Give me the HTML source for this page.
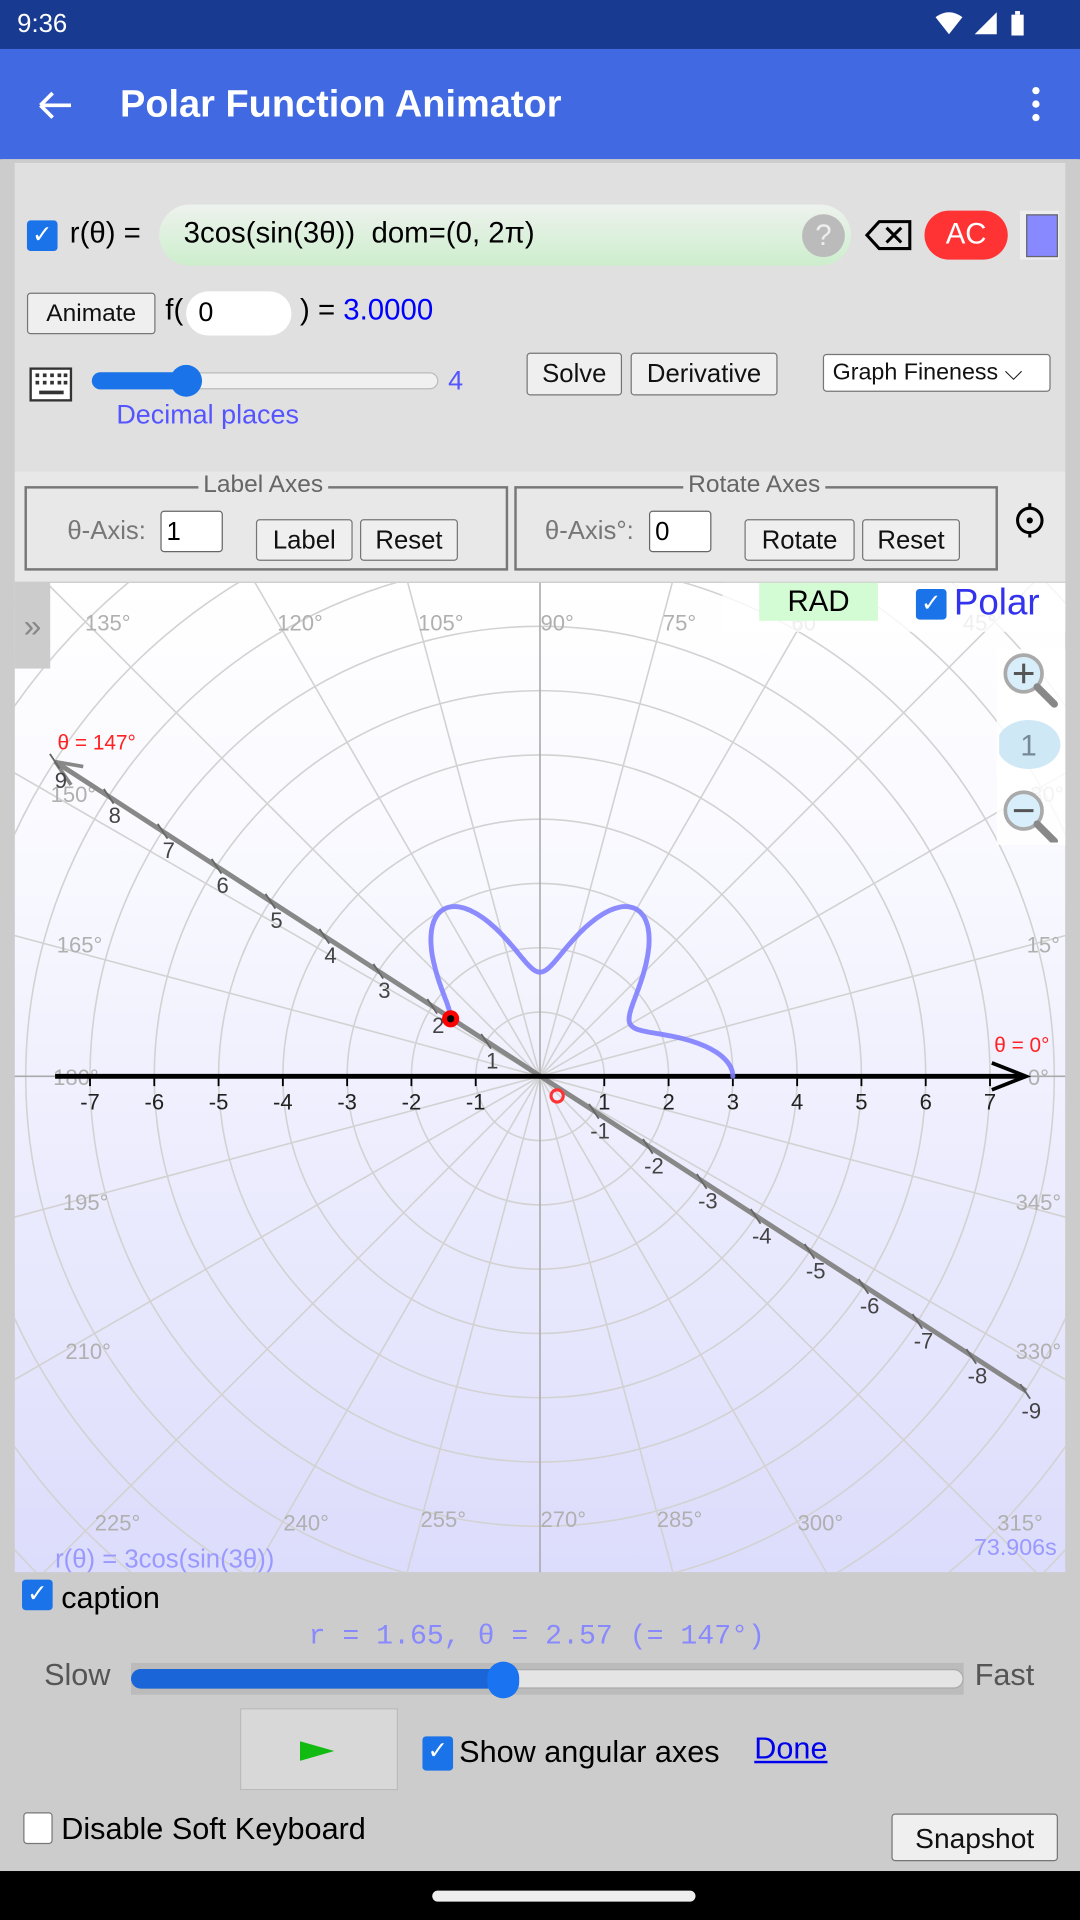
<!DOCTYPE html>
<html><head><meta charset="utf-8"><style>
html,body{margin:0;padding:0;width:1080px;height:1920px;overflow:hidden;background:#000;font-family:"Liberation Sans","DejaVu Sans",sans-serif}
#w{position:absolute;left:0;top:0;width:882px;height:1568px;transform:scale(1.22449);transform-origin:0 0;background:#ccc;overflow:hidden}
.a{position:absolute}
.btn{position:absolute;background:#efefef;border:1.5px solid #767676;border-radius:3px;font-size:20px;color:#111;text-align:center;box-sizing:border-box}
.cb{position:absolute;width:25px;height:25px;background:#1a73e8;border-radius:3px;color:#fff;font-size:20px;line-height:25px;text-align:center;font-weight:bold}
.t{position:absolute;white-space:nowrap}
</style></head><body><div id="w">
<div class="a" style="left:0;top:0;width:882px;height:40px;background:#183a91"></div>
<div class="t" style="left:14px;top:8px;color:#fff;font-size:21px">9:36</div>
<svg class="a" style="left:760px;top:8px" width="82" height="22"><path d="M4 6 Q15 -2 26 6 L15 20Z" fill="#fff"/><path d="M36 20 L54 2 L54 20Z" fill="#fff"/><rect x="66" y="4" width="10" height="17" fill="#fff"/><rect x="69" y="1" width="4" height="3" fill="#fff"/></svg>
<div class="a" style="left:0;top:40px;width:882px;height:90px;background:#4169e1"></div>
<svg class="a" style="left:30px;top:72px" width="32" height="28"><path d="M3 14H28M3 14L13 4M3 14L13 24" stroke="#fff" stroke-width="3" fill="none"/></svg>
<div class="t" style="left:98px;top:67px;color:#fff;font-size:31px;font-weight:bold">Polar Function Animator</div>
<svg class="a" style="left:838px;top:70px" width="16" height="30"><circle cx="8" cy="4" r="3" fill="#fff"/><circle cx="8" cy="15" r="3" fill="#fff"/><circle cx="8" cy="26" r="3" fill="#fff"/></svg>
<div class="a" style="left:2px;top:130px;width:878px;height:1398px;background:#ccc"></div>
<div class="a" style="left:12px;top:133px;width:858px;height:252px;background:#e0e0e0"></div>
<div class="cb" style="left:22px;top:180px">✓</div>
<div class="t" style="left:57px;top:177px;font-size:24px">r(θ) =</div>
<div class="a" style="left:130px;top:167px;width:565px;height:50px;border-radius:25px;background:linear-gradient(#eef2ee,#cdeecd)"></div>
<div class="t" style="left:150px;top:177px;font-size:24px">3cos(sin(3θ))&nbsp; dom=(0, 2π)</div>
<div class="a" style="left:655px;top:175px;width:35px;height:35px;border-radius:50%;background:#bbb;color:#eee;font-size:24px;text-align:center;line-height:35px">?</div>
<svg class="a" style="left:706px;top:178px" width="40" height="28"><path d="M12 3H37V25H12L2 14Z" fill="none" stroke="#000" stroke-width="2.5"/><path d="M18 8L30 20M30 8L18 20" stroke="#000" stroke-width="2.5"/></svg>
<div class="a" style="left:755px;top:172px;width:68px;height:40px;border-radius:20px;background:#f33;color:#fff;font-size:24px;text-align:center;line-height:40px">AC</div>
<div class="a" style="left:833px;top:172px;width:32px;height:40px;background:#eee"></div>
<div class="a" style="left:838px;top:175px;width:24px;height:33px;background:#8888ff;border:1px solid #666"></div>
<div class="btn" style="left:22px;top:239px;width:105px;height:34px;line-height:33px">Animate</div>
<div class="t" style="left:135px;top:240px;font-size:24px">f(</div>
<div class="a" style="left:152px;top:238px;width:86px;height:36px;border-radius:18px;background:#fff"></div>
<div class="t" style="left:162px;top:242px;font-size:22px">0</div>
<div class="t" style="left:245px;top:240px;font-size:24px">) = <span style="color:#00f">3.0000</span></div>
<svg class="a" style="left:24px;top:300px" width="35" height="28"><rect x="1" y="1" width="33" height="26" fill="#fff" stroke="#333" stroke-width="2"/><g fill="#333"><rect x="5" y="5" width="3" height="3"/><rect x="11" y="5" width="3" height="3"/><rect x="17" y="5" width="3" height="3"/><rect x="23" y="5" width="3" height="3"/><rect x="28" y="5" width="3" height="3"/><rect x="5" y="11" width="3" height="3"/><rect x="11" y="11" width="3" height="3"/><rect x="17" y="11" width="3" height="3"/><rect x="23" y="11" width="3" height="3"/><rect x="28" y="11" width="3" height="3"/><rect x="8" y="19" width="20" height="3"/></g></svg>
<div class="a" style="left:75px;top:304px;width:283px;height:14px;border-radius:7px;background:#f0f0f0;border:1px solid #bbb;box-sizing:border-box"></div>
<div class="a" style="left:75px;top:304px;width:80px;height:14px;border-radius:7px;background:#1a73e8"></div>
<div class="a" style="left:139px;top:298px;width:26px;height:26px;border-radius:50%;background:#1a73e8"></div>
<div class="t" style="left:366px;top:298px;font-size:22px;color:#5555ff">4</div>
<div class="t" style="left:95px;top:326px;font-size:22px;color:#5555ff">Decimal places</div>
<div class="btn" style="left:430px;top:288px;width:78px;height:35px;line-height:33px;font-size:21px">Solve</div>
<div class="btn" style="left:515px;top:288px;width:120px;height:35px;line-height:33px;font-size:21px">Derivative</div>
<div class="btn" style="left:672px;top:289px;width:186px;height:31px;line-height:29px;background:#fff;text-align:left;padding-left:7px;font-size:19px">Graph Fineness ⌵</div>
<div class="a" style="left:12px;top:385px;width:858px;height:90px;background:#e8e8e8"></div>
<div class="a" style="left:20px;top:397px;width:395px;height:69px;border:2px solid #777;box-sizing:border-box"></div>
<div class="t" style="left:162px;top:385px;font-size:20px;color:#666;background:#e8e8e8;padding:0 4px">Label Axes</div>
<div class="t" style="left:55px;top:422px;font-size:21px;color:#777">θ-Axis:</div>
<div class="a" style="left:131px;top:417px;width:51px;height:34px;background:#fff;border:1.5px solid #666;border-radius:3px;box-sizing:border-box;font-size:21px;padding:5px 4px">1</div>
<div class="btn" style="left:209px;top:424px;width:79px;height:34px;line-height:33px;font-size:21px">Label</div>
<div class="btn" style="left:294px;top:424px;width:80px;height:34px;line-height:33px;font-size:21px">Reset</div>
<div class="a" style="left:420px;top:397px;width:395px;height:69px;border:2px solid #777;box-sizing:border-box"></div>
<div class="t" style="left:558px;top:385px;font-size:20px;color:#666;background:#e8e8e8;padding:0 4px">Rotate Axes</div>
<div class="t" style="left:445px;top:422px;font-size:21px;color:#777">θ-Axis°:</div>
<div class="a" style="left:530px;top:417px;width:51px;height:34px;background:#fff;border:1.5px solid #666;border-radius:3px;box-sizing:border-box;font-size:21px;padding:5px 4px">0</div>
<div class="btn" style="left:608px;top:424px;width:90px;height:34px;line-height:33px;font-size:21px">Rotate</div>
<div class="btn" style="left:704px;top:424px;width:80px;height:34px;line-height:33px;font-size:21px">Reset</div>
<svg class="a" style="left:826px;top:408px" width="30" height="34"><circle cx="15" cy="17" r="10" fill="none" stroke="#000" stroke-width="2.5"/><circle cx="15" cy="17" r="2.5"/><path d="M15 3V7M15 27V31" stroke="#000" stroke-width="2.5"/></svg>
<svg class="a" id="g" style="left:12px;top:476px" width="858" height="808" viewBox="12 476 858 808"></svg>
<div class="a" style="left:12px;top:476px;width:29px;height:70px;background:#ccc;color:#888;font-size:26px;text-align:center;line-height:70px">»</div>
<div class="a" style="left:590px;top:476px;width:280px;height:40px;background:rgba(255,255,255,.8)"></div>
<div class="a" style="left:620px;top:476px;width:97px;height:31px;background:#d4fcd4;font-size:24px;text-align:center;line-height:31px">RAD</div>
<div class="cb" style="left:748px;top:481px;width:25px">✓</div>
<div class="t" style="left:779px;top:476px;font-size:30px;color:#3333ee">Polar</div>
<div class="a" style="left:814px;top:530px;width:56px;height:160px;background:rgba(255,255,255,.85)"></div>
<svg class="a" style="left:816px;top:532px" width="52" height="156"><g><circle cx="20" cy="18" r="15" fill="#d8eefa" stroke="#aaa" stroke-width="3"/><path d="M31 29L45 43" stroke="#888" stroke-width="6" stroke-linecap="round"/><path d="M12 18H28M20 10V26" stroke="#555" stroke-width="2.5"/></g><ellipse cx="24" cy="76" rx="26" ry="20" fill="#cfe8f5"/><text x="24" y="85" font-size="24" fill="#789" text-anchor="middle" font-family="Liberation Sans">1</text><g transform="translate(0,112)"><circle cx="20" cy="18" r="15" fill="#d8eefa" stroke="#aaa" stroke-width="3"/><path d="M31 29L45 43" stroke="#888" stroke-width="6" stroke-linecap="round"/><path d="M12 18H28" stroke="#555" stroke-width="2.5"/></g></svg>
<div class="cb" style="left:18px;top:1290px">✓</div>
<div class="t" style="left:50px;top:1291px;font-size:25px">caption</div>
<div class="t" style="left:252px;top:1323px;font-size:23px;color:#8888ff;font-family:'Liberation Mono',monospace">r = 1.65, θ = 2.57 (= 147°)</div>
<div class="t" style="left:36px;top:1354px;font-size:25px;color:#555">Slow</div>
<div class="t" style="left:796px;top:1354px;font-size:25px;color:#555">Fast</div>
<div class="a" style="left:107px;top:1358px;width:680px;height:26px;background:#bbb"></div>
<div class="a" style="left:107px;top:1363px;width:680px;height:16px;border-radius:8px;background:#e4e4e4;border:1px solid #aaa;box-sizing:border-box"></div>
<div class="a" style="left:107px;top:1363px;width:304px;height:16px;border-radius:8px;background:#1a66d8"></div>
<div class="a" style="left:398px;top:1357px;width:26px;height:30px;border-radius:13px;background:#1a73f0"></div>
<div class="a" style="left:196px;top:1395px;width:129px;height:67px;background:#d8d8d8;border:1px solid #bbb;box-sizing:border-box"></div>
<svg class="a" style="left:245px;top:1422px" width="30" height="16"><path d="M0 0L28 8L0 16Z" fill="#11bb11"/></svg>
<div class="cb" style="left:345px;top:1418px;height:28px">✓</div>
<div class="t" style="left:375px;top:1417px;font-size:25px">Show angular axes</div>
<div class="t" style="left:616px;top:1414px;font-size:25px;color:#00e;text-decoration:underline">Done</div>
<div class="a" style="left:19px;top:1480px;width:24px;height:26px;background:#fff;border:1.5px solid #777;border-radius:3px;box-sizing:border-box"></div>
<div class="t" style="left:50px;top:1480px;font-size:25px">Disable Soft Keyboard</div>
<div class="btn" style="left:728px;top:1481px;width:136px;height:39px;line-height:38px;font-size:23px">Snapshot</div>
<div class="a" style="left:0;top:1528px;width:882px;height:40px;background:#000"></div>
<div class="a" style="left:353px;top:1544px;width:215px;height:9px;border-radius:5px;background:#eee"></div>
</div>
<script>
var s='',cx=441,cy=879,u=52.5;
s+='<defs><linearGradient id="bg" x1="0" y1="0" x2="0" y2="1"><stop offset="0" stop-color="#fff"/><stop offset="0.3" stop-color="#f8f8ff"/><stop offset="1" stop-color="#dcdcfc"/></linearGradient></defs>';
s+='<rect x="12" y="476" width="858" height="808" fill="url(#bg)"/>';
for(var r=1;r<=12;r++)s+='<circle cx="'+cx+'" cy="'+cy+'" r="'+r*u+'" fill="none" stroke="#d2d2d2" stroke-width="1.3"/>';
for(var a=0;a<360;a+=15){var t=a*Math.PI/180;s+='<line x1="'+cx+'" y1="'+cy+'" x2="'+(cx+900*Math.cos(t))+'" y2="'+(cy-900*Math.sin(t))+'" stroke="'+(a%90==0?'#aaa':'#d2d2d2')+'" stroke-width="1.3"/>';}
var L=[["135°",88,515],["120°",245,515],["105°",360,515],["90°",455,515],["75°",555,515],["60°",660,515],["45°",800,515],["30°",855,655],["150°",60,655],["165°",65,778],["180°",62,886],["195°",70,988],["210°",72,1110],["225°",96,1250],["240°",250,1250],["255°",362,1247],["270°",460,1247],["285°",555,1247],["300°",670,1250],["315°",833,1250],["330°",848,1110],["345°",848,988],["15°",852,778],["0°",848,886]];
L.forEach(function(l){s+='<text x="'+l[1]+'" y="'+l[2]+'" font-size="18" fill="#b0b0b0" text-anchor="middle" font-family="Liberation Sans">'+l[0]+'</text>';});
var ux=Math.cos(147*Math.PI/180),uy=-Math.sin(147*Math.PI/180);
s+='<line x1="838" y1="1136" x2="45" y2="622" stroke="#888" stroke-width="4"/><path d="M45 622L68 626M45 622L58 641" stroke="#888" stroke-width="3"/>';
for(var n=-9;n<=9;n++){if(!n)continue;var px=cx+n*u*ux,py=cy+n*u*uy;s+='<line x1="'+(px-4)+'" y1="'+(py-6)+'" x2="'+(px+4)+'" y2="'+(py+6)+'" stroke="#666" stroke-width="1.5"/><text x="'+(px+5)+'" y="'+(py+22)+'" font-size="18" fill="#444" text-anchor="middle" font-family="Liberation Sans">'+n+'</text>';}
s+='<line x1="45" y1="879" x2="836" y2="879" stroke="#000" stroke-width="4"/><path d="M810 868L838 879L810 890" fill="none" stroke="#000" stroke-width="3"/>';
for(n=-7;n<=7;n++){if(!n)continue;var x=cx+n*u;s+='<line x1="'+x+'" y1="879" x2="'+x+'" y2="887" stroke="#000" stroke-width="1.5"/><text x="'+x+'" y="906" font-size="18" fill="#222" text-anchor="middle" font-family="Liberation Sans">'+n+'</text>';}
var d='';for(var i=0;i<=257;i++){var th=i/100,rr=3*Math.cos(Math.sin(3*th));d+=(i?'L':'M')+(cx+rr*u*Math.cos(th)).toFixed(1)+' '+(cy-rr*u*Math.sin(th)).toFixed(1);}
s+='<path d="'+d+'" fill="none" stroke="#8080ff" stroke-width="4" stroke-linecap="round" opacity=".9"/>';
s+='<circle cx="368" cy="832" r="7" fill="#f00"/><circle cx="368" cy="832" r="3" fill="#000"/><circle cx="455" cy="895" r="5" fill="none" stroke="#f33" stroke-width="2.5"/>';
s+='<text x="47" y="612" font-size="17" fill="#f22" font-family="Liberation Sans">θ = 147°</text><text x="812" y="859" font-size="17" fill="#f22" font-family="Liberation Sans">θ = 0°</text>';
s+='<text x="45" y="1280" font-size="21" fill="#9999ff" font-family="Liberation Sans">r(θ) = 3cos(sin(3θ))</text><text x="863" y="1270" font-size="19" fill="#9999ff" text-anchor="end" font-family="Liberation Sans">73.906s</text>';
document.getElementById('g').innerHTML=s;
</script>
</body></html>
